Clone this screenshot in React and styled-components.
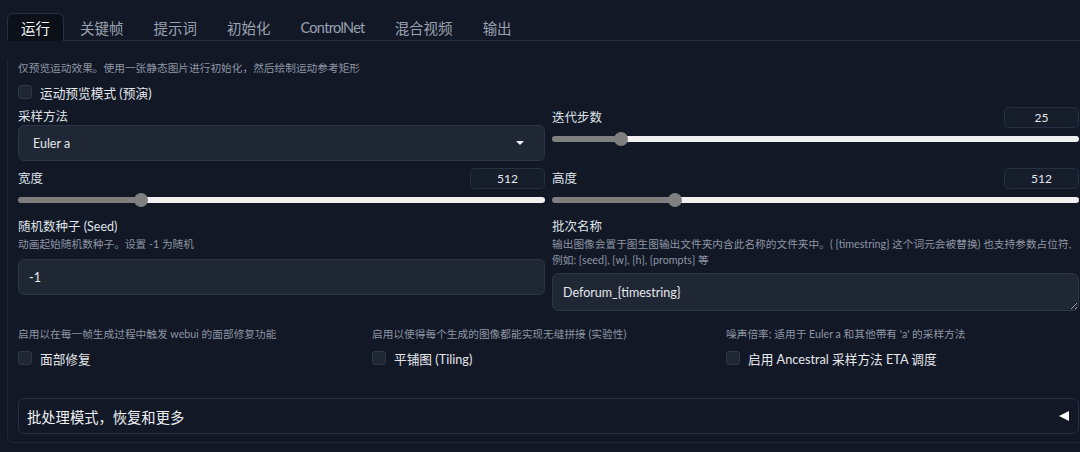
import React from "react";
import styled, { createGlobalStyle } from "styled-components";

const GlobalStyle = createGlobalStyle`
  * { box-sizing: border-box; }
  html, body {
    margin: 0;
    padding: 0;
    background: #121826;
    overflow: hidden;
  }
  body {
    font-family: Lato, "Noto Sans CJK SC", sans-serif;
    color: #e5e7eb;
  }
`;

const Page = styled.div`
  width: 1080px;
  height: 452px;
  padding: 13px 0 0 7px;
  overflow: hidden;
`;

const TabBar = styled.div`
  display: flex;
  width: 1083px;
  height: 28px;
  border-bottom: 1px solid #273141;
`;

const Tab = styled.div`
  height: 28px;
  padding: 0 ${(p) => (p.$active ? 13 : 14)}px;
  margin-right: ${(p) => (p.$active ? 1 : 0)}px;
  display: flex;
  align-items: center;
  font-size: 14.5px;
  letter-spacing: ${(p) => (p.$latin ? "-0.7px" : "0")};
  color: ${(p) => (p.$active ? "#f3f4f6" : "#9aa2b1")};
  background: ${(p) => (p.$active ? "#0c1019" : "transparent")};
  border: 1px solid ${(p) => (p.$active ? "#273141" : "transparent")};
  border-bottom: none;
  border-radius: 6px 6px 0 0;
`;

const Panel = styled.div`
  width: 1083px;
  border: 1px solid #1e2633;
  border-top: none;
  border-radius: 0 0 6px 6px;
  padding: 0 10px 8px 10px;
`;

const Info = styled.div`
  font-size: 10.7px;
  line-height: 16px;
  color: #8e96a4;
  white-space: nowrap;
  margin-top: ${(p) => p.$mt || 0}px;
`;

const CheckRow = styled.label`
  display: flex;
  align-items: center;
  gap: 8px;
  height: 18px;
  margin-top: ${(p) => p.$mt || 0}px;
  font-size: 12.7px;
  color: #e5e7eb;
`;

const Box = styled.span`
  width: 14px;
  height: 14px;
  border-radius: 3px;
  background: #1f2735;
  border: 1px solid #2e3848;
`;

const Grid = styled.div`
  display: grid;
  grid-template-columns: 1fr 1fr;
  column-gap: 7px;
  row-gap: 7px;
  margin-top: ${(p) => p.$mt || 0}px;
`;

const Field = styled.div`
  display: flex;
  flex-direction: column;
  min-width: 0;
`;

const Label = styled.div`
  font-size: 12.5px;
  line-height: ${(p) => p.$lh || 16}px;
  padding-top: ${(p) => p.$pt || 0}px;
  color: #dfe3e8;
`;

const Header = styled.div`
  display: flex;
  align-items: center;
  justify-content: space-between;
  height: 21px;
`;

const NumberBox = styled.div`
  width: 75px;
  height: 21px;
  border-radius: 5px;
  background: #161d2b;
  border: 1px solid #263041;
  font-size: 12px;
  color: #e5e7eb;
  display: flex;
  align-items: center;
  justify-content: center;
`;

const SliderWrap = styled.div`
  position: relative;
  height: 22px;
  display: flex;
  align-items: center;
`;

const Track = styled.div`
  width: 100%;
  height: 6px;
  border-radius: 3px;
  background: #f0f0f0;
`;

const Thumb = styled.div`
  position: absolute;
  top: 4px;
  width: 14px;
  height: 14px;
  border-radius: 50%;
  background: #7f7f7f;
`;

const Dropdown = styled.div`
  height: 36px;
  border-radius: 6px;
  background: #1f2735;
  border: 1px solid #2b3545;
  display: flex;
  align-items: center;
  justify-content: space-between;
  padding: 0 20px 0 14px;
  font-size: 12.5px;
  color: #e5e7eb;
`;

const Caret = styled.span`
  width: 0;
  height: 0;
  border-left: 4px solid transparent;
  border-right: 4px solid transparent;
  border-top: 4px solid #f3f4f6;
`;

const TextInput = styled.input`
  margin-top: 7px;
  height: 36px;
  border-radius: 6px;
  background: #1f2735;
  border: 1px solid #2b3545;
  padding: 0 10px;
  font-family: inherit;
  font-size: 12.5px;
  color: #e5e7eb;
  outline: none;
`;

const TextArea = styled.textarea`
  margin-top: 5px;
  height: 38px;
  border-radius: 6px;
  background: #1f2735;
  border: 1px solid #2b3545;
  padding: 10px 10px 0;
  font-family: inherit;
  font-size: 12.5px;
  line-height: 18px;
  color: #e5e7eb;
  outline: none;
  resize: vertical;
  overflow: hidden;
  color-scheme: dark;
`;

const Triple = styled.div`
  display: grid;
  grid-template-columns: repeat(3, 1fr);
  column-gap: 1px;
  margin-top: 15px;
`;

const Accordion = styled.div`
  margin-top: 31px;
  height: 36px;
  border: 1px solid #273141;
  border-radius: 6px;
  display: flex;
  align-items: center;
  justify-content: space-between;
  padding: 0 9px 0 8px;
  font-size: 14.3px;
  color: #eef0f3;
`;

const LeftArrow = styled.span`
  width: 0;
  height: 0;
  border-top: 5px solid transparent;
  border-bottom: 5px solid transparent;
  border-right: 10px solid #ffffff;
`;

const Slider = ({ min, max, value }) => {
  const p = (value - min) / (max - min);
  return (
    <SliderWrap>
      <Track
        style={{
          background: `linear-gradient(to right, #7f7f7f ${p * 100}%, #f0f0f0 ${p * 100}%)`,
        }}
      />
      <Thumb style={{ left: `calc(${p} * (100% - 14px))` }} />
    </SliderWrap>
  );
};

const SliderField = ({ label, min, max, value }) => (
  <Field>
    <Header>
      <Label>{label}</Label>
      <NumberBox>{value}</NumberBox>
    </Header>
    <Slider min={min} max={max} value={value} />
  </Field>
);

const Check = ({ children, mt }) => (
  <CheckRow $mt={mt}>
    <Box />
    {children}
  </CheckRow>
);

const tabs = ["运行", "关键帧", "提示词", "初始化", "ControlNet", "混合视频", "输出"];

export default function App() {
  return (
    <Page>
      <GlobalStyle />
      <TabBar>
        {tabs.map((t, i) => (
          <Tab key={t} $active={i === 0} $latin={t === "ControlNet"}>
            {t}
          </Tab>
        ))}
      </TabBar>
      <Panel>
        <Info $mt={19}>仅预览运动效果。使用一张静态图片进行初始化，然后绘制运动参考矩形</Info>
        <Check mt={7}>运动预览模式 (预演)</Check>

        <Grid $mt={6}>
          <Field>
            <Label $pt={2}>采样方法</Label>
            <Dropdown>
              Euler a
              <Caret />
            </Dropdown>
          </Field>
          <SliderField label="迭代步数" min={1} max={200} value={25} />

          <SliderField label="宽度" min={64} max={2048} value={512} />
          <SliderField label="高度" min={64} max={2048} value={512} />

          <Field>
            <Label $lh={18}>随机数种子 (Seed)</Label>
            <Info>动画起始随机数种子。设置 -1 为随机</Info>
            <TextInput readOnly value="-1" />
          </Field>
          <Field>
            <Label $lh={18}>批次名称</Label>
            <Info>
              输出图像会置于图生图输出文件夹内含此名称的文件夹中。( {"{timestring}"} 这个词元会被替换) 也支持参数占位符,
              <br />
              例如: {"{seed}, {w}, {h}, {prompts}"} 等
            </Info>
            <TextArea readOnly value="Deforum_{timestring}" />
          </Field>
        </Grid>

        <Triple>
          <Field>
            <Info>启用以在每一帧生成过程中触发 webui 的面部修复功能</Info>
            <Check mt={7}>面部修复</Check>
          </Field>
          <Field>
            <Info>启用以使得每个生成的图像都能实现无缝拼接 (实验性)</Info>
            <Check mt={7}>平铺图 (Tiling)</Check>
          </Field>
          <Field>
            <Info>噪声倍率; 适用于 Euler a 和其他带有 'a' 的采样方法</Info>
            <Check mt={7}>启用 Ancestral 采样方法 ETA 调度</Check>
          </Field>
        </Triple>

        <Accordion>
          批处理模式，恢复和更多
          <LeftArrow />
        </Accordion>
      </Panel>
    </Page>
  );
}
